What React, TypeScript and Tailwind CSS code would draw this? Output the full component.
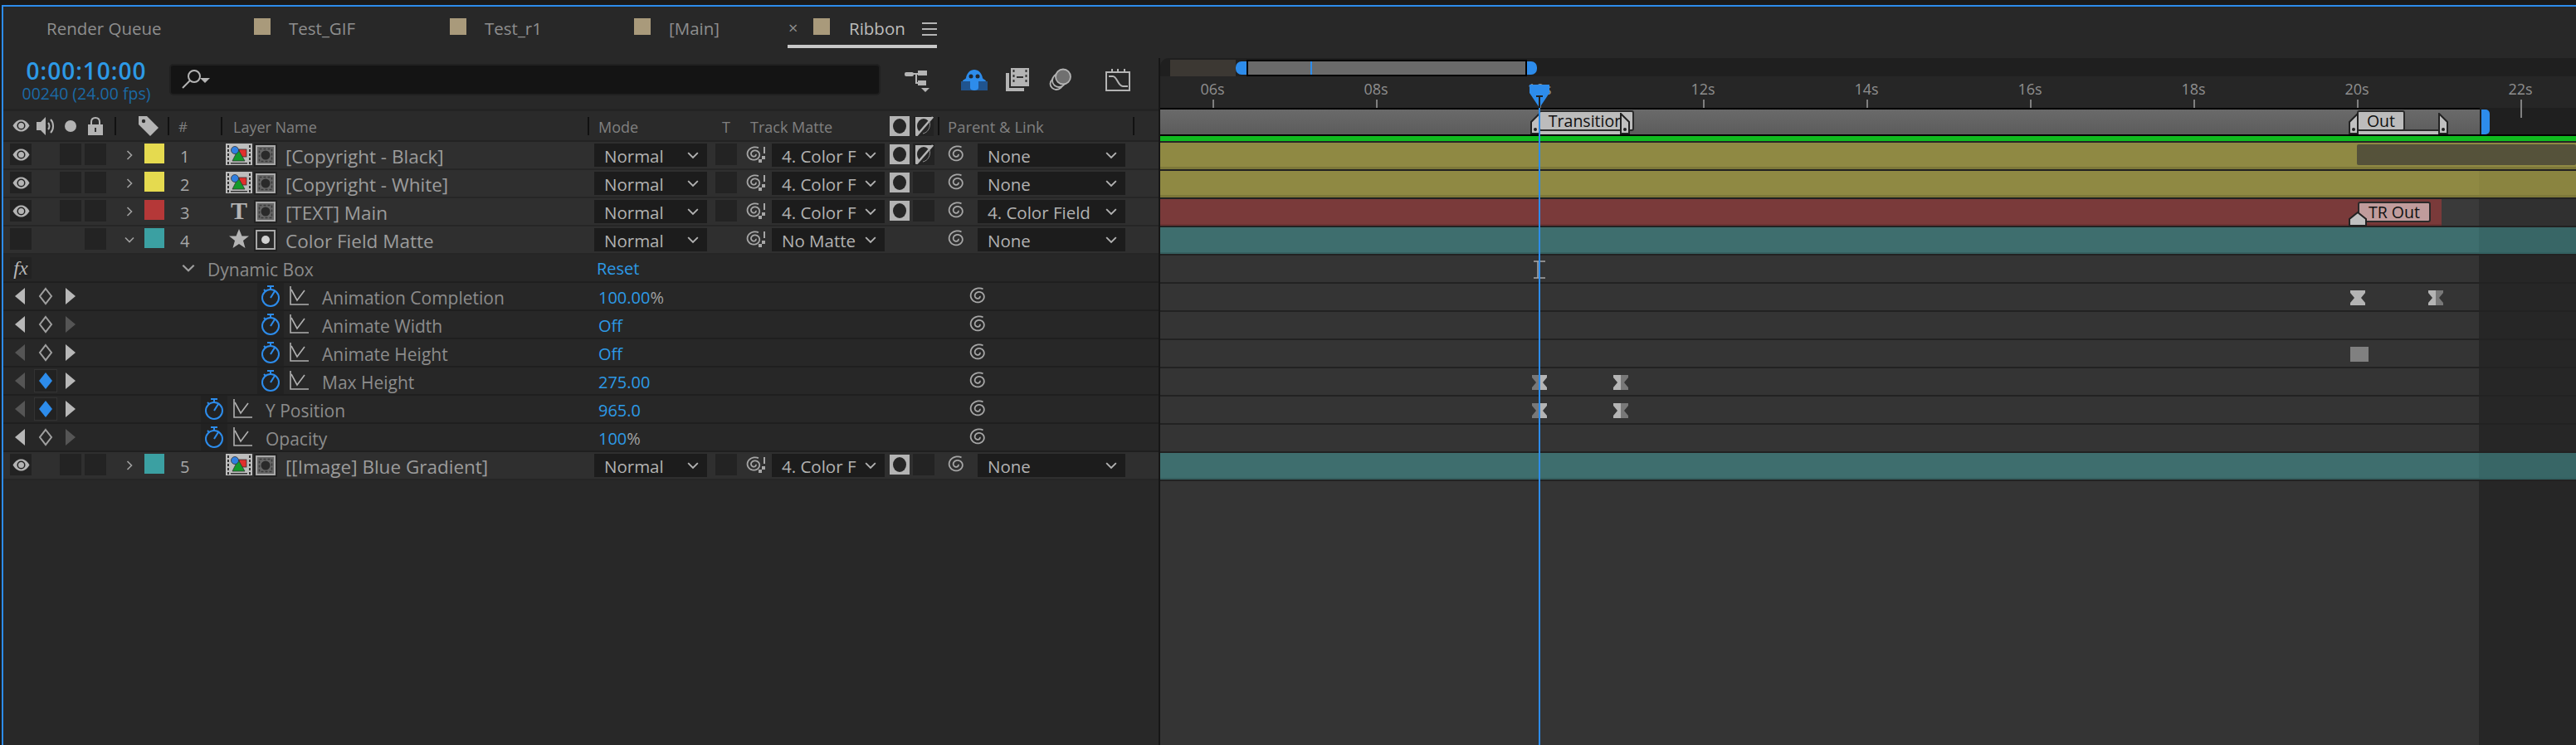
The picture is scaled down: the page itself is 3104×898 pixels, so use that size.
import type { ReactNode } from 'react';

const ICON = '#b4b4b4';
const BLUE = '#2d8ceb';

// pickwhip spiral, computed once
function spiral(cx: number, cy: number, turns: number, rMax: number) {
  const pts: string[] = [];
  const steps = 60;
  const end = 11.52;
  for (let i = 0; i <= steps; i++) {
    const t = i / steps;
    const a = end - (1 - t) * turns * Math.PI * 2;
    const r = 1.5 + (rMax - 1.5) * t;
    pts.push(`${(cx + r * Math.cos(a) * 1.1).toFixed(2)} ${(cy + r * Math.sin(a)).toFixed(2)}`);
  }
  return 'M' + pts.join('L');
}
const SPIRAL = spiral(12, 13, 1.85, 10);

function Spiral() {
  return (
    <svg width="24" height="26" viewBox="0 0 24 26" fill="none" stroke="#a6a6a6" strokeWidth="1.800">
      <path d={SPIRAL} />
    </svg>
  );
}

function MattePick() {
  return (
    <svg width="24" height="26" viewBox="0 0 24 26" fill="none">
      <path d={spiral(10, 13, 1.85, 9)} stroke="#a6a6a6" strokeWidth="1.800" />
      <rect x="21" y="4" width="2" height="8" fill="#a6a6a6" />
      <rect x="19" y="15" width="4" height="4" fill="#a6a6a6" />
      <rect x="15" y="19" width="4" height="4" fill="#a6a6a6" />
    </svg>
  );
}

function Eye() {
  return (
    <svg width="21" height="15" viewBox="0 0 21 15">
      <path d="M0.5 7.5C4 2 7 0.5 10.5 0.5S17 2 20.5 7.5C17 13 14 14.500 10.500 14.500S4 13 0.500 7.500Z" fill={ICON} />
      <circle cx="10.500" cy="7.500" r="5" fill="#222" />
      <circle cx="10.500" cy="7.500" r="3.500" fill={ICON} />
    </svg>
  );
}

function Chevron({ down = false, color = '#a0a0a0', size = 12 }: { down?: boolean; color?: string; size?: number }) {
  return (
    <svg width={size} height={size} viewBox="0 0 12 12" fill="none" stroke={color} strokeWidth="1.6">
      <path d={down ? 'M1 3.500L6 8.500L11 3.500' : 'M3.500 1L8.500 6L3.500 11'} />
    </svg>
  );
}

function CompIcon() {
  return (
    <svg width="32" height="26" viewBox="0 0 32 26">
      <rect width="32" height="26" fill="#bdbdbd" />
      {[2, 7, 12, 17, 22].map(y => (
        <g key={y}>
          <rect x="2" y={y} width="2" height="3" fill="#333" />
          <rect x="28" y={y} width="2" height="3" fill="#333" />
        </g>
      ))}
      <rect x="6" y="23" width="20" height="1.500" fill="#333" />
      <rect x="16" y="7" width="9" height="9" fill="#e0302c" stroke="#333" strokeWidth="0.800" />
      <path d="M15 7L23 21H8Z" fill="#149a2a" stroke="#333" strokeWidth="0.800" />
      <circle cx="11" cy="8" r="4.500" fill="#2f7fe0" stroke="#333" strokeWidth="0.800" />
    </svg>
  );
}

function CollapseCell({ solid = false }: { solid?: boolean }) {
  return (
    <div className="w-[28px] h-[28px] bg-[#222222] flex items-center justify-center">
      <svg width="24" height="24" viewBox="0 0 24 24">
        <rect x="1" y="1" width="22" height="22" fill={solid ? '#2a2a2a' : '#666666'} stroke="#a8a8a8" strokeWidth="2" />
        {!solid && <rect x="4.500" y="4.500" width="15" height="15" fill="none" stroke="#3a3a3a" strokeWidth="1.500" strokeDasharray="3 2" />}
        <circle cx="12" cy="12" r={solid ? 5 : 5.500} fill={solid ? '#d0d0d0' : '#2a2a2a'} />
      </svg>
    </div>
  );
}

function MaskIcon() {
  return (
    <svg width="24" height="24" viewBox="0 0 24 24">
      <rect width="24" height="24" fill="#b4b4b4" />
      <ellipse cx="12" cy="12" rx="8" ry="9" fill="#262626" />
    </svg>
  );
}

function LeafIcon() {
  return (
    <svg width="24" height="24" viewBox="0 0 24 24">
      <rect width="24" height="24" fill="#232323" />
      <path d="M2 1H24L2 24Z" fill="#b4b4b4" />
      <ellipse cx="12" cy="12" rx="8" ry="9" fill="#262626" />
      <path d="M23 1L3 24" stroke="#b4b4b4" strokeWidth="2.500" />
      <path d="M19 6C21 13 17 20 11 21" fill="none" stroke="#8a8a8a" strokeWidth="1" />
    </svg>
  );
}

function Dropdown({ w, label }: { w: string; label: string }) {
  return (
    <div className={`${w} h-[28px] bg-[#1c1c1c] flex items-center justify-between pl-[12px] pr-[10px] shrink-0`}>
      <span className="text-[20.500px] leading-none pt-[2px] text-[#b2b2b2] whitespace-nowrap">{label}</span>
      <Chevron down size={14} color="#b2b2b2" />
    </div>
  );
}

function BlankCell({ className = '' }: { className?: string }) {
  return <div className={`w-[26px] h-[26px] bg-[#232323] shrink-0 ${className}`} />;
}

type LayerProps = {
  num: number;
  color: string;
  name: string;
  source: ReactNode;
  solid?: boolean;
  open?: boolean;
  visible?: boolean;
  matte: string;
  parent: string;
  leaf?: boolean;
  mask?: boolean;
};

function LayerRow({ num, color, name, source, solid, open, visible = true, matte, parent, leaf, mask = true }: LayerProps) {
  return (
    <div className="h-[34px] bg-[#2f2f2f] border-b-2 border-[#262626] flex items-start pt-[2px] relative">
      <div className="ml-[8px] w-[26px] h-[26px] bg-[#222222] flex items-center justify-center shrink-0">{visible && <Eye />}</div>
      <BlankCell className={open ? 'ml-[34px] !bg-transparent' : 'ml-[34px]'} />
      <BlankCell className="ml-[4px]" />
      <div className="ml-[22px] w-[12px] h-[28px] flex items-center justify-center shrink-0"><Chevron down={open} /></div>
      <div className="ml-[12px] w-[24px] h-[24px] shrink-0" style={{ background: color }} />
      <div className="ml-[19px] w-[30px] text-[20px] leading-[32px] text-[#a8a8a8] shrink-0">{num}</div>
      <div className="ml-[25px] w-[32px] h-[26px] flex items-center justify-center shrink-0">{source}</div>
      <div className="ml-[2px] shrink-0"><CollapseCell solid={solid} /></div>
      <div className="ml-[10px] w-[364px] shrink-0 text-[22.500px] leading-[31px] font-medium text-[#9c9c9c] whitespace-nowrap">{name}</div>
      <Dropdown w="ml-[8px] w-[136px]" label="Normal" />
      {mask ? <BlankCell className="ml-[10px]" /> : <div className="ml-[10px] w-[26px] shrink-0" />}
      <div className="ml-[11px] w-[24px] shrink-0"><MattePick /></div>
      <Dropdown w="ml-[7px] w-[136px]" label={matte} />
      {mask ? (
        <div className="ml-[6px] w-[24px] h-[26px] flex items-center shrink-0"><MaskIcon /></div>
      ) : (
        <div className="ml-[6px] w-[24px] shrink-0" />
      )}
      {mask ? (
        <div className="ml-[4px] w-[26px] h-[26px] bg-[#232323] flex items-center justify-center shrink-0">{leaf && <LeafIcon />}</div>
      ) : (
        <div className="ml-[4px] w-[26px] shrink-0" />
      )}
      <div className="ml-[15px] w-[24px] shrink-0"><Spiral /></div>
      <Dropdown w="ml-[13px] w-[178px]" label={parent} />
    </div>
  );
}

function Stopwatch() {
  return (
    <svg width="24" height="28" viewBox="0 0 24 28" fill="none" stroke={BLUE} strokeWidth="2">
      <circle cx="12" cy="16" r="10" />
      <path d="M12 16L17 8" />
      <path d="M8 2H16M12 2V6M4 6L6 8" />
    </svg>
  );
}

function GraphIcon() {
  return (
    <svg width="24" height="26" viewBox="0 0 24 26" fill="none" stroke="#b0b0b0" strokeWidth="1.600">
      <path d="M1 1V23H23" />
      <path d="M2 5L9 18L18 6" />
    </svg>
  );
}

function KeyNav({ left = true, right = true, active = false }: { left?: boolean; right?: boolean; active?: boolean }) {
  return (
    <div className="flex items-center ml-[14px] w-[80px] shrink-0 h-[32px]">
      <svg width="12" height="20" viewBox="0 0 12 20" className="shrink-0"><path d="M12 0V20L0 10Z" fill={left ? '#b8b8b8' : '#555555'} /></svg>
      <div className={`ml-[11px] w-[28px] h-[28px] flex items-center justify-center shrink-0 ${active ? 'bg-[#222222] border border-[#333333]' : ''}`}>
        <svg width="18" height="22" viewBox="0 0 18 22">
          {active ? <path d="M9 1L17 11L9 21L1 11Z" fill={BLUE} /> : <path d="M9 2L16 11L9 20L2 11Z" fill="none" stroke="#a0a0a0" strokeWidth="2" />}
        </svg>
      </div>
      <svg width="12" height="20" viewBox="0 0 12 20" className="ml-[10px] shrink-0"><path d="M0 0V20L12 10Z" fill={right ? '#b8b8b8' : '#555555'} /></svg>
    </div>
  );
}

type PropProps = { label: string; value: string; unit?: string; indent: number; left?: boolean; right?: boolean; active?: boolean };

function PropRow({ label, value, unit, indent, left, right, active }: PropProps) {
  return (
    <div className="h-[34px] bg-[#272727] border-b-2 border-[#1f1f1f] flex items-center">
      <KeyNav left={left} right={right} active={active} />
      <div style={{ marginLeft: indent }} className="w-[32px] h-[32px] bg-[#222222] flex items-center justify-center shrink-0"><Stopwatch /></div>
      <div className="ml-[7px] shrink-0"><GraphIcon /></div>
      <div style={{ width: 545 - indent }} className="ml-[15px] pt-[6px] shrink-0 text-[21px] text-[#8c8c8c] whitespace-nowrap">{label}</div>
      <div className="w-[446px] pt-[4px] shrink-0 text-[20px] text-[#2d9ae6] whitespace-nowrap">
        {value}{unit && <span className="text-[#a0a0a0]">{unit}</span>}
      </div>
      <Spiral />
    </div>
  );
}

function Tab({ label, className }: { label: string; className: string }) {
  return (
    <div className={`flex items-start h-[24px] shrink-0 ${className}`}>
      <div className="mt-[2px] w-[20px] h-[20px] bg-[#a99a7b] shrink-0" />
      <span className="ml-[22px] mt-[2px] text-[20.500px] leading-[24px] text-[#8e8e8e] whitespace-nowrap">{label}</span>
    </div>
  );
}

function Hourglass({ x, y, l = '#b4b4b4', r = '#b4b4b4' }: { x: number; y: number; l?: string; r?: string }) {
  return (
    <svg width="18" height="18" viewBox="0 0 18 18" className="absolute" style={{ left: x, top: y }}>
      <path d="M0 0H9V18H0V15L5 9L0 3Z" fill={l} />
      <path d="M9 0H18V3L13 9L18 15V18H9Z" fill={r} />
    </svg>
  );
}

function Bracket({ x, flip = false }: { x: number; flip?: boolean }) {
  return (
    <svg width="12" height="26" viewBox="0 0 12 26" className="absolute" style={{ left: x, top: 6, transform: flip ? 'scaleX(-1)' : undefined }}>
      <path d="M1 25V11L11 1V25Z" fill="#c0c0c0" stroke="#222" strokeWidth="2" />
      <circle cx="6" cy="20" r="2" fill="#222" />
    </svg>
  );
}

function CompMarker({ x, w, barW, label }: { x: number; w: number; barW: number; label: string }) {
  return (
    <>
      <div className="absolute h-[6px] top-[26px] bg-[#bcbcbc] border-t-2 border-[#2a2a2a]" style={{ left: x + 11, width: barW }} />
      <div className="absolute top-[3px] h-[25px] bg-[#bcbcbc] border-2 border-[#2a2a2a] rounded-[3px] flex items-center justify-center text-[19.500px] text-[#111111] leading-none pt-[1px]" style={{ left: x + 10, width: w }}>
        {label}
      </div>
      <Bracket x={x} />
      <Bracket x={x + 11 + barW - 1} flip />
    </>
  );
}

function TimeRow({ main, rest, children }: { main: string; rest: string; children?: ReactNode }) {
  return (
    <div className="h-[34px] bg-[#222222] flex pb-[2px] relative">
      <div className={`w-[1589px] shrink-0 ${main}`} />
      <div className={`flex-1 ${rest}`} />
      {children}
    </div>
  );
}

const EMPTY_MAIN = 'bg-[#343434]';
const EMPTY_REST = 'bg-[#262626]';

export default function App() {
  const rulerLabels = ['06s', '08s', '10s', '12s', '14s', '16s', '18s', '20s', '22s'];
  return (
    <div className="w-[3104px] h-[898px] overflow-hidden bg-[#1a1a1a] pt-[6px] pl-[2px] relative font-['Open_Sans',sans-serif]">
      <div className="h-[892px] bg-[#282828] border-t-2 border-l-2 border-[#2d8ceb]">
        {/* tab strip */}
        <div className="h-[62px] flex items-start pt-[12px]">
          <div className="w-[302px] pl-[52px] shrink-0 text-[20.500px] leading-[28px] text-[#8e8e8e] whitespace-nowrap">Render Queue</div>
          <Tab label="Test_GIF" className="w-[236px]" />
          <Tab label="Test_r1" className="w-[222px]" />
          <Tab label="[Main]" className="w-[185px]" />
          <div className="w-[180px] h-[38px] border-b-4 border-[#c8c8c8] flex items-start shrink-0">
            <span className="w-[31px] pl-[1px] text-[20px] leading-[28px] text-[#8e8e8e]">×</span>
            <div className="mt-[2px] w-[20px] h-[20px] bg-[#a99a7b] shrink-0" />
            <span className="ml-[23px] mt-[2px] w-[88px] text-[20.500px] leading-[24px] text-[#bcbcbc]">Ribbon</span>
            <svg width="18" height="18" viewBox="0 0 18 18" className="mt-[6px] shrink-0"><path d="M0 2H18M0 9H18M0 16H18" stroke="#b4b4b4" strokeWidth="2" /></svg>
          </div>
        </div>

        <div className="flex h-[828px]">
          {/* left panel */}
          <div className="w-[1392px] shrink-0">
            <div className="h-[64px] border-b-[3px] border-[#232323] flex items-start pt-[7px]">
              <div className="w-[200px] -mt-[7px] shrink-0 flex flex-col items-center">
                <div className="text-[28px] leading-[30px] font-semibold text-[#2d9ae6] tracking-[1px]">0:00:10:00</div>
                <div className="text-[19.500px] leading-[24px] text-[#1b6aa6] mt-[1px] whitespace-nowrap">00240 (24.00 fps)</div>
              </div>
              <div className="w-[857px] h-[38px] shrink-0 bg-[#141414] border-2 border-[#202020] rounded-[5px] flex items-center pl-[12px]">
                <svg width="36" height="28" viewBox="0 0 36 28" fill="none">
                  <circle cx="16" cy="10" r="7" stroke="#b4b4b4" strokeWidth="2" />
                  <path d="M11 15L2 24" stroke="#b4b4b4" strokeWidth="2" />
                  <path d="M23 12H35L29 18Z" fill="#b4b4b4" />
                </svg>
              </div>
              <svg width="30" height="26" viewBox="0 0 30 26" fill={ICON} className="ml-[29px] mt-[8px] shrink-0">
                <rect x="0" y="2" width="11" height="5" rx="2" />
                <rect x="16" y="0" width="11" height="6" />
                <rect x="16" y="12" width="10" height="6" />
                <path d="M10 4H17M14 4V15H17" fill="none" stroke="#b4b4b4" strokeWidth="2" />
                <path d="M20 21H30L25 26Z" />
              </svg>
              <svg width="32" height="26" viewBox="0 0 32 26" className="ml-[38px] mt-[6px] shrink-0">
                <rect x="0" y="15" width="32" height="11" fill="#20548f" />
                <path d="M2 15C2 13 5 13 6 11C7 5 11 1 16 1S25 5 26 11C27 13 30 13 30 15H21V23C21 27 11 27 11 23V15Z" fill="#2d8ceb" />
                <circle cx="12" cy="9" r="2.500" fill="#20262c" />
                <circle cx="20" cy="9" r="2.500" fill="#20262c" />
              </svg>
              <svg width="28" height="28" viewBox="0 0 28 28" className="ml-[22px] mt-[5px] shrink-0" fill={ICON}>
                <path d="M6 0H28V22H6Z" />
                <path d="M0 6H4V24H22V28H0Z" />
                <path d="M8.500 2H10.500V5H8.500ZM8.500 8H10.500V11H8.500ZM8.500 14H10.500V17H8.500ZM23.500 2H25.500V5H23.500ZM23.500 8H25.500V11H23.500ZM23.500 14H25.500V17H23.500ZM13 10H21V12H13Z" fill="#333" />
              </svg>
              <svg width="28" height="28" viewBox="0 0 28 28" className="ml-[24px] mt-[5px] shrink-0" fill="none" stroke={ICON} strokeWidth="1.800">
                <ellipse cx="9" cy="19" rx="7.500" ry="7" />
                <ellipse cx="12" cy="15" rx="8" ry="8" fill="#282828" />
                <circle cx="17" cy="10.500" r="9" fill="#707070" />
              </svg>
              <svg width="30" height="28" viewBox="0 0 30 28" className="ml-[40px] mt-[5px] shrink-0" fill="none" stroke={ICON} strokeWidth="2">
                <rect x="1" y="5" width="28" height="22" />
                <path d="M8 1V5M15 1V5M23 1V5M0 11H1M0 21H1" />
                <path d="M4 10H9C14 10 15 22 21 22H27" />
              </svg>
            </div>

            <div className="h-[37px] bg-[#2a2a2a] border-b-2 border-[#232323] flex items-center">
              <div className="ml-[11px] shrink-0"><Eye /></div>
              <svg width="23" height="24" viewBox="0 0 23 24" className="ml-[8px] shrink-0" fill="none">
                <path d="M0 7H5L11 1V23L5 17H0Z" fill={ICON} />
                <path d="M14 8C16 10 16 14 14 16M17 4C21 8 21 16 17 20" stroke={ICON} strokeWidth="2" />
              </svg>
              <div className="ml-[11px] w-[14px] h-[14px] rounded-full bg-[#b4b4b4] shrink-0" />
              <svg width="18" height="22" viewBox="0 0 18 22" className="ml-[14px] shrink-0">
                <path d="M4 9V6C4 3 6 1 9 1S14 3 14 6V9" fill="none" stroke={ICON} strokeWidth="2" />
                <rect y="9" width="18" height="13" fill={ICON} />
                <rect x="8" y="13" width="2" height="5" fill="#333" />
              </svg>
              <div className="ml-[14px] w-[2px] h-[22px] bg-[#111111] shrink-0" />
              <svg width="24" height="24" viewBox="0 0 24 24" className="ml-[27px] shrink-0">
                <path d="M0 0H10L24 14L14 24L0 10Z" fill={ICON} />
                <circle cx="6" cy="6" r="2.200" fill="#2a2a2a" />
              </svg>
              <div className="ml-[11px] w-[2px] h-[22px] bg-[#111111] shrink-0" />
              <span className="ml-[11px] pt-[3px] w-[51px] shrink-0 text-[17px] text-[#808080]">#</span>
              <div className="w-[2px] h-[22px] bg-[#111111] shrink-0" />
              <span className="ml-[13px] pt-[3px] w-[427px] shrink-0 text-[18px] text-[#808080]">Layer Name</span>
              <div className="w-[2px] h-[22px] bg-[#111111] shrink-0" />
              <span className="ml-[11px] pt-[3px] w-[149px] shrink-0 text-[18px] text-[#808080]">Mode</span>
              <span className="w-[34px] pt-[3px] shrink-0 text-[18px] text-[#808080]">T</span>
              <span className="w-[168px] pt-[3px] shrink-0 text-[18px] text-[#808080] whitespace-nowrap">Track Matte</span>
              <div className="shrink-0"><MaskIcon /></div>
              <div className="ml-[5px] shrink-0"><LeafIcon /></div>
              <div className="ml-[5px] w-[2px] h-[22px] bg-[#111111] shrink-0" />
              <span className="ml-[10px] pt-[3px] w-[223px] shrink-0 text-[18.500px] text-[#808080] whitespace-nowrap">Parent &amp; Link</span>
              <div className="w-[2px] h-[22px] bg-[#111111] shrink-0" />
            </div>

            <LayerRow num={1} color="#e5da4f" name="[Copyright - Black]" source={<CompIcon />} matte="4. Color F" parent="None" leaf />
            <LayerRow num={2} color="#e5da4f" name="[Copyright - White]" source={<CompIcon />} matte="4. Color F" parent="None" />
            <LayerRow num={3} color="#b53838" name="[TEXT] Main" source={<span className="font-['Liberation_Serif',serif] font-bold text-[30px] leading-none text-[#b4b4b4]">T</span>} matte="4. Color F" parent="4. Color Field" />
            <LayerRow
              num={4}
              color="#3ba0a2"
              name="Color Field Matte"
              source={<svg width="26" height="26" viewBox="0 0 26 26"><path d="M13 1L16.500 9.500H25L18 15L20.500 24L13 19L5.500 24L8 15L1 9.500H9.500Z" fill={ICON} /></svg>}
              solid
              open
              visible={false}
              matte="No Matte"
              parent="None"
              mask={false}
            />

            <div className="h-[34px] bg-[#272727] border-b-2 border-[#1f1f1f] flex items-center">
              <div className="ml-[8px] w-[26px] h-[26px] bg-[#222222] flex items-center justify-center shrink-0 font-['Liberation_Serif',serif] italic text-[24px] leading-none text-[#b8b8b8]">fx</div>
              <div className="ml-[181px] shrink-0"><Chevron down size={16} /></div>
              <span className="ml-[15px] pt-[5px] w-[469px] shrink-0 text-[21px] text-[#8c8c8c] whitespace-nowrap">Dynamic Box</span>
              <span className="pt-[1px] text-[20px] text-[#2d9ae6]">Reset</span>
            </div>
            <PropRow label="Animation Completion" value="100.00" unit="%" indent={212} />
            <PropRow label="Animate Width" value="Off" indent={212} right={false} />
            <PropRow label="Animate Height" value="Off" indent={212} left={false} />
            <PropRow label="Max Height" value="275.00" indent={212} left={false} active />
            <PropRow label="Y Position" value="965.0" indent={144} left={false} active />
            <PropRow label="Opacity" value="100" unit="%" indent={144} right={false} />
            <LayerRow num={5} color="#3ba0a2" name="[[Image] Blue Gradient]" source={<CompIcon />} matte="4. Color F" parent="None" />
          </div>

          {/* timeline */}
          <div className="flex-1 border-l-2 border-[#161616] min-w-0 relative overflow-hidden">
            <div className="h-[22px] bg-[#1f1f1f] rounded-tl-[10px] flex items-stretch">
              <div className="ml-[12px] mt-[2px] w-[79px] bg-[#3c3833]" />
              <div className="mt-[4px] mb-[2px] w-[13px] bg-[#2d8ceb] rounded-l-[7px]" />
              <div className="mt-[2px] w-[338px] bg-[#6a6a6a] border-2 border-black relative">
                <div className="absolute left-[75px] top-0 bottom-0 w-[2px] bg-[#2d8ceb]" />
              </div>
              <div className="mt-[4px] mb-[2px] w-[12px] bg-[#2d8ceb] rounded-r-[7px]" />
            </div>
            <div className="h-[38px] bg-[#262626] relative">
              {rulerLabels.map((t, i) => (
                <div key={t} className="absolute top-0 h-[38px]" style={{ left: 63 + 197 * i }}>
                  <span className="absolute -left-[17px] top-[3px] w-[34px] text-center text-[18px] leading-[24px] text-[#8f8f8f]">{t}</span>
                  <div className="absolute left-0 top-[28px] w-[2px] h-[10px] bg-[#808080]" />
                </div>
              ))}
              <div className="absolute left-[1639px] top-[28px] w-[2px] h-[22px] bg-[#808080] z-10" />
            </div>
            <div className="h-[34px] bg-[#1f1f1f] relative">
              <div className="h-[34px] w-[1590px] bg-black py-[2px]">
                <div className="h-[30px] bg-gradient-to-b from-[#6a6a6a] to-[#5c5c5c]" />
              </div>
              <div className="absolute left-[1592px] top-[2px] w-[10px] h-[30px] bg-[#2d8ceb] rounded-r-[5px]" />
              <div className="absolute left-[1590px] right-0 top-[32px] h-[2px] bg-black" />
              <CompMarker x={446} w={115} barW={98} label="Transition" />
              <CompMarker x={1432} w={58} barW={98} label="Out" />
            </div>
            <div className="h-[6px] bg-[#10bb1f]" />
            <div className="h-[2px] bg-[#262626]" />

            <TimeRow main="" rest="">
              <div className="absolute inset-x-0 top-0 h-[32px] flex border-b-[3px] border-[#7d7839] bg-[#8f8943]">
                <div className="ml-[1442px] flex-1 my-[2px] rounded-[2px] bg-[#55523a]" />
              </div>
            </TimeRow>
            <TimeRow main="bg-[#8f8943] border-b-[3px] border-[#7d7839]" rest="bg-[#8a8440] border-b-[3px] border-[#7d7839]" />
            <TimeRow main="bg-[#3a3a3a]" rest="bg-[#303030]">
              <div className="absolute left-0 top-0 w-[1544px] h-[32px] bg-[#7a3a3a] border-b-[2px] border-[#6d3333]" />
              <div className="absolute left-[1443px] top-[3px] w-[88px] h-[25px] bg-[#c09c9c] border-2 border-[#2a2a2a] rounded-[3px] flex items-center justify-center text-[19.500px] leading-none pt-[1px] text-[#111111]">TR Out</div>
              <svg width="22" height="18" viewBox="0 0 22 18" className="absolute left-[1432px] top-[15px]">
                <path d="M1 17V9L11 1L21 9V17Z" fill="#c0c0c0" stroke="#222" strokeWidth="2" />
              </svg>
            </TimeRow>
            <TimeRow main="bg-[#3e6e6e] border-b-2 border-[#366060]" rest="bg-[#386666] border-b-2 border-[#336060]" />

            <TimeRow main={EMPTY_MAIN} rest={EMPTY_REST}>
              <svg width="14" height="22" viewBox="0 0 14 22" className="absolute left-[450px] top-[6px]" fill="none" stroke="#a8a8a8" strokeWidth="1.500">
                <path d="M0 1H14M0 21H14M5 1V21" />
              </svg>
            </TimeRow>
            <TimeRow main={EMPTY_MAIN} rest={EMPTY_REST}>
              <Hourglass x={1434} y={8} />
              <Hourglass x={1528} y={8} r="#787878" />
            </TimeRow>
            <TimeRow main={EMPTY_MAIN} rest={EMPTY_REST} />
            <TimeRow main={EMPTY_MAIN} rest={EMPTY_REST}>
              <div className="absolute left-[1434px] top-[8px] w-[22px] h-[18px] bg-[#808080]" />
            </TimeRow>
            <TimeRow main={EMPTY_MAIN} rest={EMPTY_REST}>
              <Hourglass x={448} y={8} l="#787878" />
              <Hourglass x={546} y={8} r="#787878" />
            </TimeRow>
            <TimeRow main={EMPTY_MAIN} rest={EMPTY_REST}>
              <Hourglass x={448} y={8} l="#787878" />
              <Hourglass x={546} y={8} r="#787878" />
            </TimeRow>
            <TimeRow main={EMPTY_MAIN} rest={EMPTY_REST} />
            <TimeRow main="bg-[#3e6e6e] border-b-2 border-[#366060]" rest="bg-[#386666] border-b-2 border-[#336060]" />
            <div className="flex h-[330px]">
              <div className="w-[1589px] shrink-0 bg-[#343434]" />
              <div className="flex-1 bg-[#262626]" />
            </div>

            {/* playhead */}
            <div className="absolute left-[456px] top-[60px] bottom-0 w-[2px] bg-[#2d8ceb]" />
            <svg width="24" height="28" viewBox="0 0 24 28" className="absolute left-[445px] top-[32px]">
              <path d="M0 0H24V10L12 28L0 10Z" fill="#2d8ceb" />
              <path d="M8 13H16V15H13V28H11V15H8Z" fill="#222" />
            </svg>
          </div>
        </div>
      </div>
    </div>
  );
}
